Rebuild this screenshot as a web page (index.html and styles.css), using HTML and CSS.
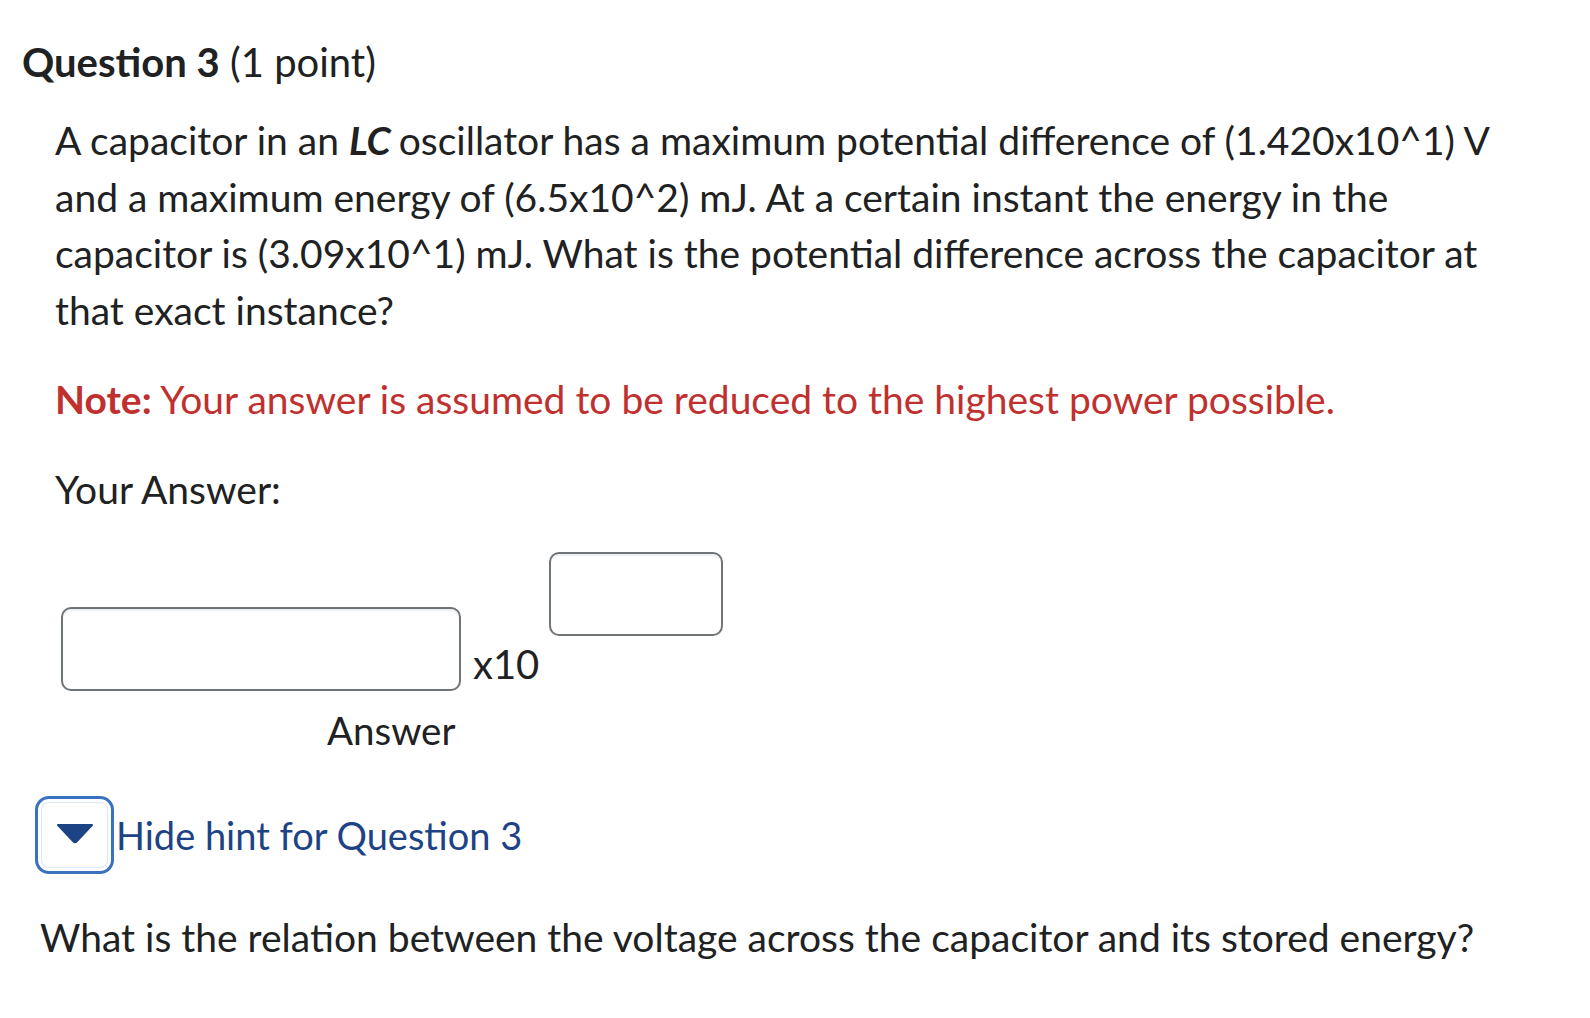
FILE: index.html
```html
<!DOCTYPE html>
<html>
<head>
<meta charset="utf-8">
<link rel="stylesheet" href="styles.css">
</head>
<body>
<div class="page">
  <h2 class="qtitle"><strong>Question 3</strong> (1 point)</h2>
  <div class="qbody">
    <p class="stem">A capacitor in an <em class="var">LC</em> oscillator has a maximum potential difference of (1.420x10^1) V and a maximum energy of (6.5x10^2) mJ. At a certain instant the energy in the capacitor is (3.09x10^1) mJ. What is the potential difference across the capacitor at that exact instance?</p>
    <p class="note"><strong>Note:</strong> Your answer is assumed to be reduced to the highest power possible.</p>
    <p class="label">Your Answer:</p>
    <div class="answer">
      <div class="answer-col">
        <div class="row">
          <input class="box main" type="text" aria-label="Answer">
          <span class="x10">x10</span>
          <input class="box exp" type="text" aria-label="Power">
        </div>
        <div class="caption">Answer</div>
      </div>
    </div>
  </div>
  <div class="hint">
    <button class="hint-btn" aria-label="Hide hint">
      <svg width="38" height="22" viewBox="0 0 38 22"><path d="M2 2 L36 2 L20.5 18.5 Q19 20 17.5 18.5 Z" fill="#1e4385" stroke="#1e4385" stroke-width="2" stroke-linejoin="round"/></svg>
    </button>
    <span class="hint-text">Hide hint for Question 3</span>
  </div>
  <p class="hint-body">What is the relation between the voltage across the capacitor and its stored energy?</p>
</div>
</body>
</html>
```
FILE: styles.css
```css
html, body {
  margin: 0;
  padding: 0;
  background: #ffffff;
}
body {
  font-family: Lato, "Noto Sans", sans-serif;
  color: #202122;
}
.page {
  padding: 38px 0 0 22px;
}
.qtitle {
  margin: 0;
  font-size: 40px;
  font-weight: 400;
  line-height: 48px;
  color: #202122;
}
.qtitle strong {
  font-weight: 700;
}
.qbody {
  padding-left: 33px;
  padding-top: 26px;
}
.stem {
  margin: 0;
  font-size: 39px;
  line-height: 56.5px;
  width: 1450px;
}
.var {
  font-weight: 700;
  font-style: italic;
  margin-right: -2px;
}
.note {
  margin: 34px 0 0;
  font-size: 39px;
  line-height: 55px;
  color: #c0302e;
}
.note strong {
  font-weight: 700;
}
.label {
  margin: 35px 0 0;
  font-size: 39px;
  line-height: 55px;
}
.answer {
  margin-top: 35px;
  padding-left: 6px;
}
.answer-col {
  display: inline-flex;
  flex-direction: column;
}
.row {
  display: flex;
  align-items: flex-start;
}
.box {
  box-sizing: border-box;
  border: 2px solid #6f7479;
  border-radius: 10px;
  background: #fff;
  box-shadow: inset 0 3px 2px -1px #eceef0;
  outline: none;
  margin: 0;
}
.main {
  width: 400px;
  height: 84px;
  margin-top: 55px;
}
.exp {
  width: 174px;
  height: 84px;
  margin-left: 10px;
}
.x10 {
  font-size: 40px;
  line-height: 40px;
  margin-left: 12px;
  margin-top: 92px;
}
.caption {
  font-size: 38.5px;
  line-height: 40px;
  margin-top: 19px;
  padding-left: 266px;
}
.hint {
  display: flex;
  align-items: center;
  margin-top: 46px;
  padding-left: 13px;
}
.hint-btn {
  box-sizing: border-box;
  width: 79px;
  height: 78px;
  border: 3px solid #3a72bd;
  border-radius: 14px;
  background: #fff;
  padding: 0;
  display: flex;
  align-items: center;
  justify-content: center;
  box-shadow: inset 0 0 0 3px #fff, inset 0 0 0 4px #dde6f3;
}
.hint-btn svg {
  display: block;
  margin-top: -2px;
}
.hint-text {
  font-size: 38px;
  color: #1e4385;
  margin-left: 2px;
  line-height: 44px;
}
.hint-body {
  margin: 41px 0 0 18px;
  font-size: 39px;
  line-height: 44px;
}
```
